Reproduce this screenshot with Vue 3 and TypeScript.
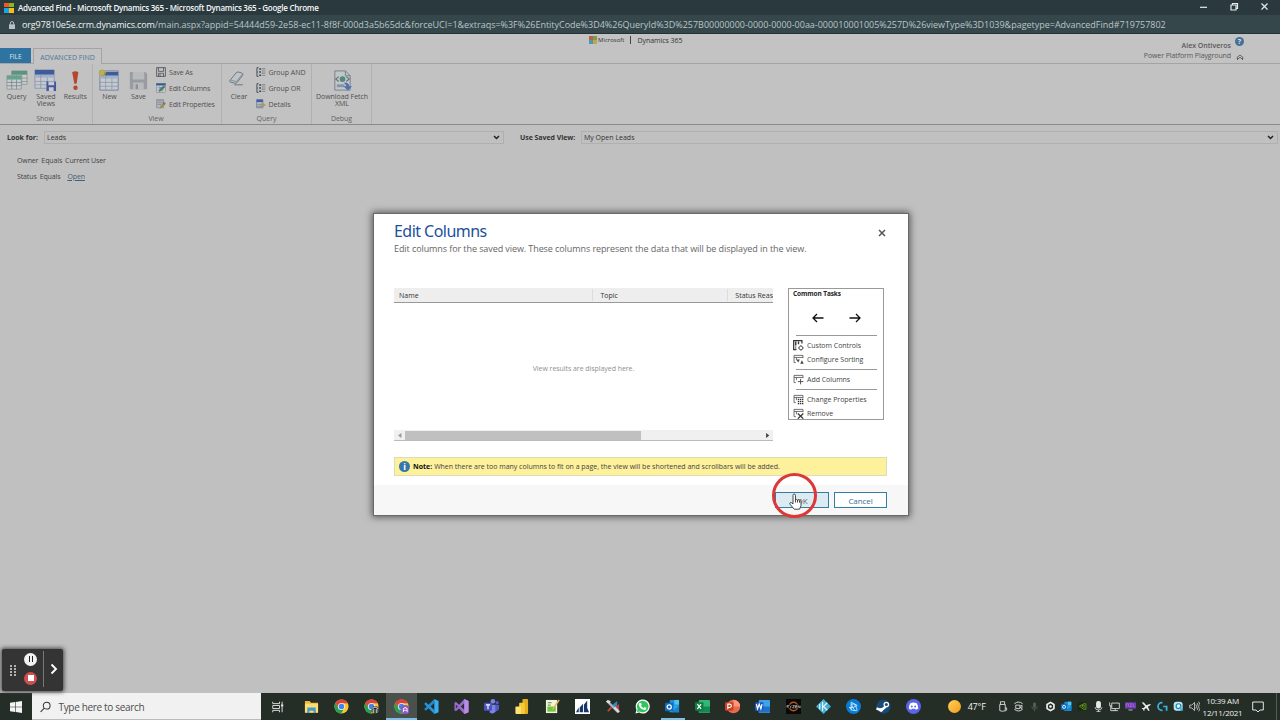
<script setup lang="ts">
interface Icon {
  name: string
  body: string
}

const calendarTable = (accent: string): string =>
  `<rect x="0.5" y="0.5" width="15" height="15" fill="#c9cdd1" stroke="#687885" stroke-width=".7"/><path d="M.5.5h15v3.5H.5z" fill="${accent}"/><path d="M5.5 4v11M10.5 4v11M1 7.5h14M1 11h14" stroke="#7d8b9c" stroke-width=".7"/>`

const outlook = `<rect x="5" y="1" width="10" height="10" rx="1" fill="#1f8fdb"/><path d="M10 1h5v5h-5z" fill="#50c4f0"/><path d="M4 7l11 0v7H5z" fill="#28a8ea"/><path d="M15 7l-8 7h8z" fill="#1583cf"/><rect x="0" y="4" width="9" height="9" rx="1" fill="#0f6cbd"/><circle cx="4.500" cy="8.500" r="2.200" fill="none" stroke="#fff" stroke-width="1.300"/>`

const chrome = `<circle cx="8" cy="8" r="7.500" fill="#f9c62f"/><path d="M8 8L1.500 4.250A7.500 7.500 0 0 1 14.500 4.250L8 4.500z" fill="#dc4437"/><path d="M8 4.500h6.650A7.500 7.500 0 0 0 1.500 4.250L5 10z" fill="#dc4437"/><path d="M1.500 4.250A7.500 7.500 0 0 0 7.500 15.500L11 9.800 5 10z" fill="#26a052"/><circle cx="8" cy="8" r="3.800" fill="#f2f2f2"/><circle cx="8" cy="8" r="2.900" fill="#4383ec"/>`

const officeTile = (light: string, mid: string, dark: string, mark: string): string =>
  `<rect x="4" y="1" width="12" height="14" rx="1" fill="${light}"/><path d="M4 8h12v6.500H4z" fill="${mid}"/><rect x="0" y="3.500" width="9" height="9" rx="1" fill="${dark}"/><path d="${mark}" fill="none" stroke="#fff" stroke-width="1.300"/>`

const tableTask = `<path d="M4 12.500H1.500V2h13V6M1.500 5h13M5 5V9" fill="none" stroke="#555" stroke-width="1.200"/>`
const groupGlyph = `<path d="M4 1H1.500v14H4M1.500 8H3" fill="none" stroke="#404952" stroke-width="1.500"/><path d="M5 3h3M5 8h3M5 13h3" stroke="#404952" stroke-width="2.400"/><path d="M9 2.500h6M9 5h6M9 8h6M9 10.500h6M9 13.500h6" stroke="#68727c" stroke-width="1"/>`

const icons: Record<string, string> = {
  query: `<path d="M7 2h16v14H7z" fill="#c8cccd" stroke="#74848a" stroke-width=".6"/><path d="M7 2h16v4H7z" fill="#5b9580"/><path d="M12 6v10M17.500 6v10M7 9.500h16M7 13h16" stroke="#74848a" stroke-width=".7"/><path d="M2 7h15v14H2z" fill="#c8cccd" stroke="#74848a" stroke-width=".6"/><path d="M2 7h15v4H2z" fill="#67a38a"/><path d="M7 11v10M12 11v10M2 14h15M2 17.500h15" stroke="#74848a" stroke-width=".8"/>`,
  savedViews: `<rect x="1" y="1" width="20" height="19" fill="#c6c9ce" stroke="#7486a0" stroke-width=".7"/><path d="M1 1h20v5H1z" fill="#3e5c9a"/><path d="M1 6h20v3H1z" fill="#9fb0cb"/><path d="M7 6v14M14 9v11M1 13h20M1 16.500h20" stroke="#8796ad" stroke-width=".8"/><path d="M13 13h10v10H13z" fill="#445799"/><path d="M15 13h6v4h-6zM15.500 19h5v4h-5z" fill="#c9c9d4"/>`,
  results: `<path d="M8.500 3.500Q12 1 15 3.500L13.200 15q-1.200 1-2.500 0z" fill="#b6472f"/><circle cx="12" cy="19.500" r="2.300" fill="#b6472f"/>`,
  newView: `<rect x="2" y="2" width="19" height="20" fill="#c6c9ce" stroke="#61738f" stroke-width=".8"/><path d="M3 3h18v4H3z" fill="#3e5c9a"/><path d="M2 7h19v3H2z" fill="#9fb0cb"/><path d="M8 7v15M14.500 10v12M2 14h19M2 18h19" stroke="#8796ad" stroke-width=".8"/><path d="M4.500 0v8M.500 4h8M1.700 1.200l5.600 5.600M7.300 1.200L1.700 6.800" stroke="#c4b03c" stroke-width="1.200"/>`,
  save: `<path d="M3 3h16l2 2v16H3z" fill="#999ba0"/><path d="M6 3h12v8H6zM6.500 14h11v7h-11z" fill="#b9babd"/><path d="M9 16h2.500v5H9z" fill="#8e9095"/>`,
  saveAs: `<path d="M1 1h14v14H1z" fill="none" stroke="#50545a" stroke-width="1.400"/><path d="M4 1v6h8V1M4 15v-5h8v5M6.500 11v4" fill="none" stroke="#50545a" stroke-width="1.300"/>`,
  editColumns: `${calendarTable('#365d91')}<path d="M5 11l7-7 3 2-7 7-4 1z" fill="#527a68"/><path d="M6 8h5" stroke="#468267" stroke-width="2"/>`,
  editProperties: `<path d="M1 1h11v13H1z" fill="#b8babd" stroke="#777b82"/><path d="M2 3h9M2 6h8M2 9h6" stroke="#6d7684"/><path d="M7 11l6-7 3 3-7 7-3 1z" fill="#a28a53"/><path d="M11 6l3 3" stroke="#57769d" stroke-width="2"/>`,
  clear: `<path d="M2 12L8.500 4q1-1.200 3-.700l3 1q2 .700.700 2.500L9.500 14q-1 1.200-2.500.800l-4-1q-1.800-.500-1-1.800z" fill="#bdc4ca" stroke="#687680" stroke-width="1"/><path d="M2.500 11.500l6 1.700L15.500 5" fill="none" stroke="#7c8b97" stroke-width=".9"/><path d="M6.500 16.500h9" stroke="#6b747b"/>`,
  group: groupGlyph,
  details: `<path d="M1 1h10v13H1z" fill="#b6bbc7" stroke="#576690"/><path d="M1 1h10v4H1z" fill="#435fa0"/><path d="M2 9h8M2 12h8" stroke="#6b7ea4"/><path d="M7 7h5l4 2.500-4 2.500H7z" fill="#a59e55"/>`,
  download: `<path d="M4 2h11l5 5v15H4z" fill="#c3c6c8" stroke="#75808a"/><path d="M15 2v5h5" fill="none" stroke="#75808a"/><path d="M8 8l-3 2.500L8 13M16 8l3 2.500L16 13" fill="none" stroke="#65707a" stroke-width="1.200"/><circle cx="12" cy="10.500" r="3" fill="#508c78"/><path d="M6 17.500h8" stroke="#8495aa" stroke-width="3"/><path d="M14 14q5 0 5 4h3l-4.500 4.500L13 18h3q0-2-2-3z" fill="#506fae"/>`,
  customControls: `<path d="M5 14H1V1h12v4" fill="none" stroke="#333" stroke-width="1.800"/><path d="M3 2v6h2V2zM7 2v4h2V2z" fill="#333"/><path d="M4 9v4" stroke="#333"/><circle cx="11.500" cy="11.500" r="2.800" fill="#fff" stroke="#444" stroke-width="1.200"/><path d="M11.500 7.300v2M11.500 13.700v2M7.300 11.500h2M13.700 11.500h2" stroke="#444"/>`,
  sorting: `${tableTask}<path d="M5 8h5l-2.500 4.500zM10.500 14h5L13 9z" fill="#444"/>`,
  addColumns: `${tableTask}<path d="M11 7v8M7 11h8" stroke="#444" stroke-width="1.300"/>`,
  properties: `${tableTask}<path d="M7 8h2M7 11h2M7 14h2M10 8h2M10 11h2M10 14h2M13 8h2M13 11h2M13 14h2" stroke="#333" stroke-width="2"/>`,
  remove: `${tableTask}<path d="M7 8l8 7.500M15 8l-8 7.500" stroke="#333" stroke-width="1.800"/>`,
  taskView: `<path d="M1 1v2.500h9V1M1 15v-2.500h9V15M1 6h9v4H1zM13.500 1v3.500M13.500 8v7" fill="none" stroke="#e8e8e8" stroke-width="1.200"/><path d="M12 4.500h3v3h-3z" fill="#e8e8e8"/>`,
  explorer: `<path d="M1 2h5l1.500 2H15v11H1z" fill="#eeb83b"/><path d="M1 5h14v9H1z" fill="#ffdc70"/><path d="M3.500 9h9v6h-2.300v-2.500H5.800V15H3.500z" fill="#3f99d3"/>`,
  chrome,
  chromeProfile: `${chrome}<circle cx="12" cy="11.500" r="4" fill="#4d504c"/><path d="M9 10l3-1.500 3 2M10 15v-4M13.500 15v-4" stroke="#b4b1aa" stroke-width="1.300"/>`,
  chromeActive: `${chrome}<circle cx="12" cy="11.500" r="5" fill="#8957b9"/><path d="M10 14V10.500l2-1.500 2 1.500V14M10 12h4" fill="none" stroke="#f0e6ff" stroke-width="1.100"/>`,
  vscode: `<path d="M11 0v4.200L2 12.500.500 11.300v-1L11 0z" fill="#2388cc"/><path d="M11 16v-4.200L2 3.500.500 4.700v1L11 16z" fill="#2795dd"/><path d="M11 0l4.500 2v12L11 16z" fill="#36aef4"/>`,
  visualStudio: `<path d="M11 0l4.500 2v12L11 16 5.500 10 2 13 .500 12V4L2 3l3.500 3z" fill="#9b68cf"/><path d="M11 4.500v7L7.200 8zM2 6v4l2-2z" fill="#283034"/><path d="M11 0l4.500 2v12L11 16z" fill="#b88de4"/>`,
  teams: `<circle cx="9.500" cy="2.500" r="2.500" fill="#7b83eb"/><circle cx="14" cy="4" r="1.800" fill="#5059c9"/><path d="M6 6h7v5a4 4 0 0 1-7 3z" fill="#7b83eb"/><path d="M12 6.500h4v4q-.500 3-4 2.500z" fill="#5059c9"/><rect y="4" width="8.500" height="8.500" rx="1" fill="#4b53bc"/><path d="M2 6.200h4.500M4.250 6.200V11" stroke="#fff" stroke-width="1.200"/>`,
  powerBi: `<rect x="9" y="0" width="6" height="16" rx="1" fill="#e5ad20"/><rect x="5.500" y="4" width="6" height="12" rx="1" fill="#f5cc35"/><rect x="1.500" y="8" width="6" height="8" rx="1" fill="#ffe170"/>`,
  notepad: `<path d="M1 1h12v14H1z" fill="#f0f3dd"/><path d="M2.500 8h9v5.500h-9z" fill="#75c43d"/><path d="M3 4h4M3 6.500h3" stroke="#54763a"/><path d="M14.500.500l1.200 1.200-6.400 9-2 1 1-2.400z" fill="#e1b949"/>`,
  dynamics: `<path d="M0 0h16v16H0z" fill="#fff"/><path d="M1 14l3-5v5zM5 14V9l3.500-4v9zM9.500 14V6L13 1.500v8l2 4.500z" fill="#16356b"/>`,
  tools: `<path d="M8 6l5-4v11z" fill="#3288c6"/><path d="M10 10l5-5v9z" fill="#c63c35"/><path d="M2 2l12 12" stroke="#aab3b6" stroke-width="2.500"/><path d="M1 3l2-2 3 1-1 3z" fill="#d9dedf"/><path d="M7 9L3 13" stroke="#c44437" stroke-width="2"/><path d="M10 9l5 5" stroke="#d5dbdd" stroke-width="2.500"/>`,
  whatsapp: `<path d="M.500 15.500l1.100-4A7.500 7.500 0 1 1 4.500 14.500z" fill="#fff"/><path d="M2 14l.800-3A6.200 6.200 0 1 1 5 13.300z" fill="#31c65b"/><path d="M5 4l1.500.200.700 2-.900 1q1.200 2 3 2.500l1-1.100 2 1q-.300 2-2.300 2Q5 10.800 4 6.500 3.800 5 5 4z" fill="#fff"/>`,
  outlook,
  excel: officeTile('#32b875', '#178852', '#107c41', 'M2.500 5.500l4 5M6.500 5.500l-4 5'),
  powerpoint: `<circle cx="9" cy="8" r="7.200" fill="#e76b4d"/><path d="M9 .8A7.200 7.200 0 0 1 16.200 8H9z" fill="#ff9878"/><rect y="3.500" width="9" height="9" rx="1" fill="#c94324"/><path d="M3 11V5.500h2q1.800.200 1.800 1.700T5 9H3" fill="none" stroke="#fff" stroke-width="1.200"/>`,
  word: officeTile('#43a1ec', '#2072c6', '#195abd', 'M1.500 5.500l1.200 5 1.800-5 1.800 5 1.200-5'),
  ryzen: `<path d="M0 0h16v16H0z" fill="#090909"/><circle cx="8" cy="8" r="4.500" fill="none" stroke="#b55425" stroke-width="1.500"/><path d="M0 8h16" stroke="#090909" stroke-width="4"/><path d="M1 9V7h2L1.500 8.500 3 9.500M4 7l1 1v1.500M6 7l-1 1M7 7h2L7 9.500h2M12 7h-2v2.500h2M10 8h2M13 9.500V7l2 2.500V7" fill="none" stroke="#ddd0c9" stroke-width=".7"/>`,
  kodi: `<path d="M8 0l8 8-8 8-8-8z" fill="#43add4"/><path d="M7 3v10M7 9l5-5M8 8l4 4M4 5v6" stroke="#e3f5fb" stroke-width="1.300"/>`,
  battle: `<circle cx="8" cy="8" r="8" fill="#087bd7"/><path d="M5.500 12.500V3.500q3 .500 5 4.500t1 4.500Q7 13.500 3.500 9q4 1 8.500-2-3-3-6-1.500 0 3 3 6" fill="none" stroke="#c8e8ff" stroke-width="1"/>`,
  steam: `<circle cx="8" cy="8" r="7.600" fill="#174a78"/><path d="M.500 10l5 2 5-4" fill="none" stroke="#fff" stroke-width="2.600"/><circle cx="11" cy="5.800" r="3" fill="#fff"/><circle cx="11" cy="5.800" r="1.600" fill="#174a78"/><circle cx="5.400" cy="11.500" r="2" fill="#fff"/>`,
  discord: `<circle cx="8" cy="8" r="8" fill="#5865e8"/><path d="M4.500 4.500Q8 3.200 11.500 4.500 13 7 13 10.500l-2.500 1-.800-1H6.300l-.800 1L3 10.500Q3 7 4.500 4.500z" fill="#fff"/><circle cx="6.200" cy="8" r="1" fill="#5865e8"/><circle cx="9.800" cy="8" r="1" fill="#5865e8"/>`,
  usb: `<path d="M4 5h8v9q-4 2-8 0zM5 5V1h6v4M12 10h2v3l-2 2" fill="none" stroke="#ddd" stroke-width="1.300"/>`,
  camera: `<path d="M2 4q6-5 12 0M2 12q6 5 12 0" fill="none" stroke="#ddd" stroke-width="1.400"/><path d="M4 6h6v5H4zM10 8l3-2v5l-3-2" fill="none" stroke="#ddd" stroke-width="1.300"/>`,
  micMuted: `<rect x="6" y="2" width="4" height="8" rx="2" fill="#596059"/><path d="M4 8q0 4 4 4t4-4M8 12v3" fill="none" stroke="#596059" stroke-width="1.200"/>`,
  shield: `<path d="M8 2l5 3v6l-5 3-5-3V5z" fill="none" stroke="#f1f1f1" stroke-width="2.400"/><circle cx="8" cy="8" r="1.800" fill="#fff"/>`,
  nvidia: `<path d="M1 2h13v12H1z" fill="#192b0e"/><path d="M3 8q3-4 6-1-2 4-5 1M9 4h4v8H9M7 5q4 0 4 3-1 3-4 3" fill="none" stroke="#6d9a2a" stroke-width="1.300"/>`,
  mic: `<rect x="4.500" y="0" width="7" height="11" rx="3" fill="#e9e9e9"/><path d="M3 9q0 4 5 4t5-4M8 13v3M5 15.500h6" fill="none" stroke="#ddd" stroke-width="1.200"/>`,
  network: `<path d="M4 3h11v8H4zM9 11v3M6 14h7M1 2v5h3M2.500 7v7h4" fill="none" stroke="#ddd" stroke-width="1.300"/>`,
  display: `<path d="M0 2h16v9H0z" fill="#6445bd"/><path d="M2 8V4h3v4M7 4h3L7 8h3M12 4v4h2" fill="none" stroke="#c659c0" stroke-width="1.300"/><path d="M5 13h6" stroke="#938c9b" stroke-width="2"/>`,
  plane: `<path d="M1.500 2q2-1 4 1.500L7.500 6 13 4.500l1.500 1-4.500 3L12.500 14l-1.500.500L7.500 10l-2.500 2v2l-1 .500-1-2.500-2-1 .500-1H4L6 7.500 2.500 4z" fill="#ececec"/>`,
  logitech: `<path d="M8 2.500H7a5.500 5.500 0 0 0 0 11h1M9 8h5v6" fill="none" stroke="#35b5e0" stroke-width="2.500"/>`,
  quick: `<rect x="1" y="1" width="13" height="13" rx="4" fill="#bfe6f3"/><circle cx="8" cy="7.500" r="3.500" fill="#e9f7fb" stroke="#178bbb" stroke-width="1.800"/><path d="M9 9l5 5" fill="none" stroke="#38b3df" stroke-width="2.500"/>`,
  speaker: `<path d="M1 6h3l4-4v12l-4-4H1zM10 5q2 3 0 6M12 3q3.500 5 0 10M14 1q5 7 0 14" fill="none" stroke="#e4e4e4" stroke-width="1.100"/>`,
}

const pinnedApps: { name: string; state?: 'active' | 'open' }[] = [
  { name: 'explorer' }, { name: 'chrome' }, { name: 'chromeProfile' },
  { name: 'chromeActive', state: 'active' }, { name: 'vscode' }, { name: 'visualStudio' },
  { name: 'teams' }, { name: 'powerBi' }, { name: 'notepad' }, { name: 'dynamics' },
  { name: 'tools' }, { name: 'whatsapp' }, { name: 'outlook', state: 'open' },
  { name: 'excel' }, { name: 'powerpoint' }, { name: 'word' }, { name: 'ryzen' },
  { name: 'kodi' }, { name: 'battle' }, { name: 'steam' }, { name: 'discord' },
]

const trayIcons: Icon[] = [
  'usb', 'camera', 'micMuted', 'shield', 'outlook', 'nvidia', 'mic',
  'network', 'display', 'plane', 'logitech', 'quick', 'speaker',
].map((name) => ({ name, body: icons[name] }))

interface RibbonGroup {
  id: string
  label: string
  large: { icon: string; label: string }[]
  small: { icon: string; label: string }[]
}

const ribbon: RibbonGroup[] = [
  {
    id: 'show', label: 'Show', small: [],
    large: [
      { icon: 'query', label: 'Query' },
      { icon: 'savedViews', label: 'Saved Views' },
      { icon: 'results', label: 'Results' },
    ],
  },
  {
    id: 'view', label: 'View',
    large: [{ icon: 'newView', label: 'New' }, { icon: 'save', label: 'Save' }],
    small: [
      { icon: 'saveAs', label: 'Save As' },
      { icon: 'editColumns', label: 'Edit Columns' },
      { icon: 'editProperties', label: 'Edit Properties' },
    ],
  },
  {
    id: 'query', label: 'Query',
    large: [{ icon: 'clear', label: 'Clear' }],
    small: [
      { icon: 'group', label: 'Group AND' },
      { icon: 'group', label: 'Group OR' },
      { icon: 'details', label: 'Details' },
    ],
  },
  { id: 'debug', label: 'Debug', large: [{ icon: 'download', label: 'Download Fetch XML' }], small: [] },
]

const taskGroups = [
  [{ icon: 'customControls', label: 'Custom Controls' }, { icon: 'sorting', label: 'Configure Sorting' }],
  [{ icon: 'addColumns', label: 'Add Columns' }],
  [{ icon: 'properties', label: 'Change Properties' }, { icon: 'remove', label: 'Remove' }],
]

const host = 'org97810e5e.crm.dynamics.com'
const path =
  '/main.aspx?appid=54444d59-2e58-ec11-8f8f-000d3a5b65dc&forceUCI=1&extraqs=%3F%26EntityCode%3D4%26QueryId%3D%257B00000000-0000-0000-00aa-000010001005%257D%26viewType%3D1039&pagetype=AdvancedFind#719757802'
</script>

<template>
  <div class="screen">
    <header class="titlebar">
      <span class="ms-logo"><i /><i /><i /><i /></span>
      <span class="window-title">Advanced Find - Microsoft Dynamics 365 - Microsoft Dynamics 365 - Google Chrome</span>
      <svg class="window-controls" viewBox="0 0 92 15" fill="none" stroke="#e6e9ea" stroke-width="1.200">
        <path d="M10 7.300h7" />
        <path d="M41 5h5v5h-5zM42.500 5V3.500h5v5H46" />
        <path d="M71.500 3.500l6 6M77.500 3.500l-6 6" />
      </svg>
    </header>

    <div class="addressbar">
      <svg class="lock" viewBox="0 0 6 8"><path d="M0 3.300h6V8H0z" fill="#b9c1c3" /><path d="M1.400 3.500V2q0-1.400 1.600-1.400T4.600 2v1.500" fill="none" stroke="#b9c1c3" /></svg>
      <span class="url"><b>{{ host }}</b>{{ path }}</span>
    </div>

    <section class="page">
      <div class="brandbar">
        <nav class="tabs">
          <span class="tab file">FILE</span>
          <span class="tab current">ADVANCED FIND</span>
        </nav>
        <div class="brand">
          <span class="ms-logo muted"><i /><i /><i /><i /></span>
          <span class="brand-ms">Microsoft</span>
          <span class="brand-rule" />
          <span class="brand-product">Dynamics 365</span>
        </div>
        <div class="account">
          <div class="names">
            <span class="user">Alex Ontiveros</span>
            <span class="org">Power Platform Playground</span>
          </div>
          <div class="account-icons">
            <span class="help">?</span>
            <svg viewBox="0 0 8 7" fill="none" stroke="#555" stroke-width=".9"><path d="M1 3.500L4 1l3 2.500v1H5.500L4 3.300 2.500 4.500H1zM1 6l1.500-1.500M7 6L5.500 4.500" /></svg>
          </div>
        </div>
      </div>

      <div class="ribbon">
        <div v-for="group in ribbon" :key="group.id" class="group" :class="group.id">
          <div class="group-body">
            <div v-for="item in group.large" :key="item.label" class="large">
              <svg viewBox="0 0 24 24" v-html="icons[item.icon]" />
              <span>{{ item.label }}</span>
            </div>
            <div v-if="group.small.length" class="small-list">
              <div v-for="item in group.small" :key="item.label" class="small">
                <svg viewBox="0 0 16 16" v-html="icons[item.icon]" />
                <span>{{ item.label }}</span>
              </div>
            </div>
          </div>
          <span class="group-label">{{ group.label }}</span>
        </div>
      </div>

      <div class="selectors">
        <label class="look">Look for:</label>
        <div class="select look-select">
          <span>Leads</span>
          <svg viewBox="0 0 7 5"><path d="M1 1l2.500 2.500L6 1" fill="none" stroke="#222" stroke-width="1.500" /></svg>
        </div>
        <label class="saved">Use Saved View:</label>
        <div class="select saved-select">
          <span>My Open Leads</span>
          <svg viewBox="0 0 7 5"><path d="M1 1l2.500 2.500L6 1" fill="none" stroke="#222" stroke-width="1.500" /></svg>
        </div>
      </div>

      <div class="criteria">
        <div class="criterion"><span>Owner</span><span>Equals</span><span>Current User</span></div>
        <div class="criterion second"><span>Status</span><span>Equals</span><a>Open</a></div>
      </div>
    </section>

    <section class="dialog">
      <div class="dialog-head">
        <div>
          <h1>Edit Columns</h1>
          <p>Edit columns for the saved view. These columns represent the data that will be displayed in the view.</p>
        </div>
        <svg class="close" viewBox="0 0 8 8"><path d="M1 1l6 6M7 1L1 7" stroke="#555" stroke-width="1.500" /></svg>
      </div>
      <div class="dialog-body">
        <div class="preview">
          <div class="columns">
            <span class="col name">Name</span>
            <span class="col topic">Topic</span>
            <span class="col status">Status Reas</span>
          </div>
          <div class="empty">View results are displayed here.</div>
          <div class="scrollbar">
            <svg viewBox="0 0 4 6"><path d="M4 0v6L0 3z" fill="#999" /></svg>
            <span class="thumb" />
            <svg viewBox="0 0 4 6"><path d="M0 0v6l4-3z" fill="#444" /></svg>
          </div>
        </div>
        <aside class="tasks">
          <h2>Common Tasks</h2>
          <div class="arrows">
            <svg viewBox="0 0 12 10"><path d="M11.500 5H1M5 1L1 5l4 4" /></svg>
            <svg viewBox="0 0 12 10"><path d="M.500 5H11M7 1l4 4-4 4" /></svg>
          </div>
          <div v-for="(group, index) in taskGroups" :key="index" class="task-group">
            <div v-for="task in group" :key="task.label" class="task">
              <svg viewBox="0 0 16 16" v-html="icons[task.icon]" />
              <span>{{ task.label }}</span>
            </div>
          </div>
        </aside>
      </div>
      <div class="note">
        <span class="info">i</span>
        <b>Note:</b>
        <span class="note-text">When there are too many columns to fit on a page, the view will be shortened and scrollbars will be added.</span>
      </div>
      <footer class="actions">
        <span class="button ok">OK</span>
        <span class="button cancel">Cancel</span>
      </footer>
    </section>

    <span class="click-ring" />
    <svg class="pointer" viewBox="0 0 14 18"><path d="M5 11V2.500Q5 1 6.200 1T7.500 2.500V7q1-1 2 .200 1-.700 2 .500 1.500-.500 1.500 1v4l-1.500 3.500H6.200L2 11.200q-.700-1.200.500-1.600Q3.700 9.300 5 11zM7.500 7v2.500M9.500 7.200v2.300M11.500 7.700v2" fill="#fff" stroke="#343434" stroke-width=".9" stroke-linejoin="round" /></svg>

    <div class="recorder">
      <span class="grip"><i v-for="n in 8" :key="n" /></span>
      <div class="record-buttons">
        <span class="round pause"><i /><i /></span>
        <span class="round stop"><i /></span>
      </div>
      <span class="record-rule" />
      <svg viewBox="0 0 8 12"><path d="M1.500 1.500L6 6l-4.500 4.500" fill="none" stroke="#fff" stroke-width="1.900" /></svg>
    </div>

    <footer class="taskbar">
      <div class="start"><svg viewBox="0 0 12 12" fill="#f4f4f4"><path d="M0 1.700l5.200-.7v4.700H0zM5.800.9L12 0v5.700H5.800zM0 6.300h5.200V11L0 10.300zM5.800 6.300H12V12l-6.200-.9z" /></svg></div>
      <div class="search">
        <svg viewBox="0 0 12 12" fill="none" stroke="#333" stroke-width="1.100"><circle cx="7.300" cy="4.500" r="3.700" /><path d="M4.700 7.300L.700 11.300" /></svg>
        <span>Type here to search</span>
      </div>
      <div class="task-view"><svg viewBox="0 0 16 16" v-html="icons.taskView" /></div>
      <div class="apps">
        <span v-for="app in pinnedApps" :key="app.name" class="app" :class="app.state">
          <svg viewBox="0 0 16 16" v-html="icons[app.name]" />
        </span>
      </div>
      <div class="weather"><span class="sun" /><span>47°F</span></div>
      <div class="tray">
        <svg v-for="icon in trayIcons" :key="icon.name" viewBox="0 0 16 16" :class="icon.name" v-html="icon.body" />
      </div>
      <div class="clock"><span>10:39 AM</span><span>12/11/2021</span></div>
      <svg class="notifications" viewBox="0 0 12 12" fill="none" stroke="#e5e5e5"><path d="M.700 1h10.600v8H8L6 11 4 9H.700z" /></svg>
      <span class="desktop-edge" />
    </footer>
  </div>
</template>

<style>
body {
  margin: 0;
  overflow: hidden;
}
</style>

<style scoped>
.screen {
  position: relative;
  display: flex;
  flex-direction: column;
  width: 1280px;
  height: 720px;
  overflow: hidden;
  background: #c0c0c0;
  color: #444;
  font-family: "Open Sans", "Noto Sans", sans-serif;
  font-size: 7px;
  white-space: nowrap;
}
svg { display: block; flex: none; }
.titlebar {
  display: flex;
  align-items: center;
  box-sizing: border-box;
  height: 15px;
  padding-left: 4px;
  background: #2a393e;
}
.ms-logo {
  display: grid;
  grid-template-columns: 1fr 1fr;
  gap: 0.5px;
  width: 10px;
  height: 10px;
}
.ms-logo i:nth-child(1) { background: #f45725; }
.ms-logo i:nth-child(2) { background: #84bb18; }
.ms-logo i:nth-child(3) { background: #18a5e8; }
.ms-logo i:nth-child(4) { background: #f9bd18; }
.window-title {
  margin-left: 4px;
  color: #f4f7f8;
  font-size: 8px;
  font-weight: 600;
  letter-spacing: -0.255px;
}
.window-controls { width: 92px; height: 15px; margin-left: auto; margin-right: -2px; }
.addressbar {
  display: flex;
  align-items: center;
  box-sizing: border-box;
  height: 19px;
  padding: 1px 0 0 9px;
  border-bottom: 1px solid #253238;
  background: #36474b;
}
.lock { width: 6px; height: 8px; }
.url { margin-left: 7px; color: #b9c5c7; font-size: 9px; letter-spacing: -0.015px; }
.url b { color: #edf2f3; font-weight: 500; letter-spacing: -0.12px; }
.page { display: flex; flex-direction: column; flex: 1; background: #c0c0c0; }
.brandbar {
  display: grid;
  grid-template-columns: 589px 1fr auto;
  box-sizing: border-box;
  height: 30px;
  border-bottom: 1px solid #a4a4a4;
  background: #c3c3c3;
}
.tabs { display: flex; align-items: flex-end; gap: 2px; }
.tab {
  display: flex;
  align-items: center;
  justify-content: center;
  box-sizing: border-box;
  height: 15px;
  padding-top: 2px;
}
.file { width: 31px; background: #2f74a1; color: #dce8ef; font-size: 6.500px; }
.current {
  width: 69px;
  height: 16px;
  margin-bottom: -1px;
  border: 1px solid #a4a4a4;
  border-bottom: 0;
  background: #c3c3c3;
  color: #4c7698;
  font-size: 7px;
}
.brand { display: flex; align-items: center; height: 12px; color: #333; }
.brand .ms-logo { width: 8px; height: 8px; gap: .500px; }
.muted i:nth-child(1) { background: #b7604a; }
.muted i:nth-child(2) { background: #7d9a4e; }
.muted i:nth-child(3) { background: #4798ba; }
.muted i:nth-child(4) { background: #c5a34a; }
.brand-ms { margin-left: 1px; font-size: 6px; }
.brand-rule { width: 1px; height: 8px; margin: 0 6px; background: #444; }
.brand-product { font-size: 7px; letter-spacing: -0.05px; }
.account { display: flex; gap: 4px; margin-right: 36px; }
.names { display: flex; flex-direction: column; align-items: flex-end; padding-top: 7px; color: #585858; line-height: 9.500px; }
.user { font-weight: 600; }
.org { letter-spacing: -0.1px; }
.account-icons { display: flex; flex-direction: column; align-items: center; padding-top: 3px; gap: 8px; }
.account-icons svg { width: 8px; height: 7px; }
.help { width: 9px; height: 9px; border-radius: 50%; background: #466f99; color: #e0e5e9; font-size: 7px; font-weight: 700; line-height: 9px; text-align: center; }
.ribbon { display: flex; box-sizing: border-box; height: 61px; border-bottom: 1px solid #898989; background: #c2c2c2; letter-spacing: -0.04px; }
.group { display: flex; flex-direction: column; box-sizing: border-box; border-right: 1px solid #b1b1b1; color: #505050; }
.group.show { width: 93px; }
.group.view { width: 129px; }
.group.query { width: 90px; }
.group.debug { width: 60px; }
.group-body { display: flex; height: 49px; padding-left: 2px; }
.large { display: flex; flex-direction: column; align-items: center; width: 29.500px; padding-top: 5px; }
.show .large { width: 29.300px; }
.large svg { width: 23px; height: 23px; }
.large span { margin-top: 1px; text-align: center; line-height: 7px; white-space: normal; }
.view .large { width: 29px; }
.query .large { width: 30px; }
.debug .large { width: 56px; }
.small-list { display: flex; flex-direction: column; padding: 0 0 0 3px; }
.query .small-list { padding-left: 2px; }
.small { display: flex; align-items: center; height: 16px; gap: 3px; letter-spacing: -0.16px; }
.query .small { gap: 2.500px; letter-spacing: -0.04px; }
.small svg { width: 10px; height: 10px; }
.group-label { align-self: center; color: #626262; line-height: 11px; }
.show .group-label { margin-right: 2px; }
.view .group-label { margin-right: 2px; }
.selectors { display: flex; align-items: center; height: 15px; margin-top: 5px; padding-left: 7px; color: #333; }
.selectors label { font-weight: 700; }
.look { width: 37px; }
.saved { width: 61px; margin-left: 16px; letter-spacing: -0.05px; }
.select { display: flex; align-items: center; justify-content: space-between; box-sizing: border-box; height: 13px; padding: 0 3px 0 2px; border: 1px solid #b0b0b0; }
.select svg { width: 7px; height: 5px; }
.look-select { width: 460px; }
.saved-select { width: 697px; }
.criteria { padding: 11px 0 0 17px; letter-spacing: -0.12px; }
.criterion { display: flex; gap: 3px; height: 10px; line-height: 10px; }
.second { margin-top: 6px; }
.second a { margin-left: 4px; color: #3e627d; text-decoration: underline; }
.dialog {
  position: absolute;
  left: 374px;
  top: 214px;
  display: flex;
  flex-direction: column;
  width: 534px;
  height: 301px;
  background: #fff;
  box-shadow: 0 0 0 1px #6a6a6a, 0 0 7px 2px #555;
}
.dialog-head { display: flex; justify-content: space-between; height: 74px; padding: 0 22px 0 20px; }
.dialog h1 { margin: 7px 0 0; color: #1c509c; font-family: "Noto Sans", sans-serif; font-size: 16px; font-weight: 400; line-height: 20px; letter-spacing: -0.54px; }
.dialog p { margin: 2px 0 0; color: #666; font-size: 9px; line-height: 12px; letter-spacing: -0.083px; }
.close { width: 8px; height: 8px; margin-top: 15px; }
.dialog-body { display: flex; gap: 15px; height: 153px; padding-left: 20px; }
.preview { display: flex; flex-direction: column; width: 379px; height: 153px; overflow: hidden; }
.columns { display: flex; align-items: center; box-sizing: border-box; height: 15px; border-bottom: 1px solid #999; background: #eee; color: #333; }
.col { box-sizing: border-box; height: 12px; padding-left: 5px; line-height: 13px; }
.name { width: 201px; border-right: 1px solid #dcdcdc; }
.topic { width: 136px; padding-left: 7px; border-right: 1px solid #dcdcdc; }
.status { padding-left: 7px; }
.empty { display: flex; align-items: center; justify-content: center; flex: 1; padding-top: 3px; color: #909090; letter-spacing: -0.05px; }
.scrollbar { display: flex; align-items: center; box-sizing: border-box; height: 11px; border-bottom: 1px solid #bbb; background: #f0f0f0; padding: 0 4px; }
.scrollbar svg { width: 3.500px; height: 5px; }
.thumb { width: 236px; height: 9px; margin: 0 auto 0 3.500px; background: #c0c0c0; }
.tasks { box-sizing: border-box; width: 96px; height: 132px; padding: 0 6px 0 4px; border: 1px solid #999; color: #444; }
.tasks h2 { margin: 0; color: #222; font-size: 6.500px; font-weight: 700; line-height: 10px; letter-spacing: -0.1px; }
.arrows { display: flex; gap: 25px; height: 36px; align-items: center; padding: 2px 0 0 19px; box-sizing: border-box; }
.arrows svg { width: 12px; height: 10px; fill: none; stroke: #111; stroke-width: 1.300; }
.task-group { padding: 2px 0 3px; border-top: 1px solid #999; margin-left: 3px; }
.task { display: flex; align-items: center; height: 14px; margin-left: -3px; gap: 3px; letter-spacing: -0.04px; }
.task svg { width: 11px; height: 11px; }
.note { display: flex; align-items: center; box-sizing: border-box; width: 493px; height: 19px; margin: 16px 0 9px 20px; padding-left: 4px; border: 1px solid #dedbb9; background: #fdf19b; color: #444; letter-spacing: -0.015px; }
.info { width: 11px; height: 11px; margin-right: 3px; border-radius: 50%; background: #3477ab; color: #fff; font-size: 9px; font-weight: 700; line-height: 11px; text-align: center; }
.note b { margin-right: 2px; color: #111; }
.actions { display: flex; gap: 5px; box-sizing: border-box; flex: 1; justify-content: flex-end; padding: 7px 21px 0 0; background: #f7f7f7; }
.button { box-sizing: border-box; width: 54px; height: 16px; border: 1px solid #317da6; background: #fff; color: #386f94; font-size: 8px; line-height: 15px; text-align: center; letter-spacing: -0.1px; }
.cancel { width: 53px; }
.ok { background: #dcebf2; color: #666; }
.click-ring { position: absolute; left: 772px; top: 473px; box-sizing: border-box; width: 45px; height: 45px; border: 3px solid #dc3838; border-radius: 50%; }
.pointer { position: absolute; left: 788px; top: 493px; width: 14px; height: 18px; }
.recorder { position: absolute; left: 2px; top: 649px; display: flex; align-items: center; box-sizing: border-box; width: 61px; height: 42px; padding: 0 0 3px 8px; border-radius: 2px; background: #343434; box-shadow: 0 0 4px 1px #444; }
.grip { display: grid; grid-template-columns: 2px 2px; gap: 1px 2px; width: 6px; margin-top: 4px; }
.grip i { width: 1.500px; height: 2px; border-radius: 1px; background: #ddd; }
.record-buttons { display: flex; flex-direction: column; gap: 6px; margin-left: 8px; }
.round { display: flex; align-items: center; justify-content: center; gap: 2px; width: 13px; height: 13px; border-radius: 50%; }
.pause { background: #f2f2f2; }
.pause i { width: 1px; height: 6px; background: #222; }
.stop { background: #d14e50; }
.stop i { width: 6px; height: 6px; background: #fff; }
.record-rule { width: 1px; height: 36px; margin: 0 6px 0 6px; background: #777; }
.recorder svg { width: 8px; height: 12px; }
.taskbar { display: flex; align-items: stretch; height: 27px; background: #252d27; color: #eee; font-size: 8px; }
.start { display: flex; align-items: center; justify-content: center; width: 32px; }
.start svg { width: 12px; height: 12px; }
.search { display: flex; align-items: center; box-sizing: border-box; width: 229px; padding: 1px 0 0 8px; gap: 7.500px; border-bottom: 1px solid #bbb; background: #f1f1f1; color: #4c4c4c; font-size: 10px; letter-spacing: -0.33px; }
.search svg { width: 11px; height: 12px; }
.task-view { display: flex; align-items: center; justify-content: center; width: 35px; }
.task-view svg { width: 12px; height: 12px; margin-right: 2px; }
.apps { display: grid; grid-template-columns: repeat(21, 30.140px); }
.app { display: flex; align-items: center; justify-content: center; box-sizing: border-box; border-bottom: 2px solid transparent; }
.app svg { width: 15px; height: 15px; margin-top: 2px; }
.active { border-color: #83bde2; background: #4a514c; }
.open { margin: 0 3px; border-color: #83bde2; }
.weather { display: flex; align-items: center; gap: 7px; margin-left: 19px; font-size: 9px; letter-spacing: -0.15px; }
.sun { width: 13px; height: 13px; border-radius: 50%; background: linear-gradient(135deg, #ffd45a, #f39a1d); }
.tray { display: grid; grid-template-columns: repeat(13, 16px); align-items: center; justify-items: center; margin-left: auto; }
.tray svg { width: 11px; height: 11px; }
.clock { display: flex; flex-direction: column; align-items: center; justify-content: center; width: 41px; line-height: 12px; letter-spacing: -0.26px; }
.notifications { width: 12px; height: 12px; margin: 8px 12px 0 9px; }
.desktop-edge { width: 1px; margin-right: 3px; background: #555d57; }
</style>
